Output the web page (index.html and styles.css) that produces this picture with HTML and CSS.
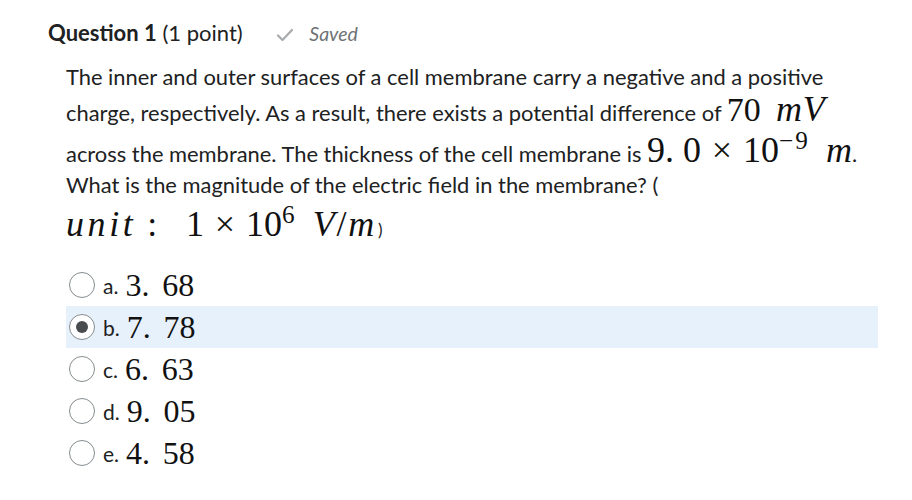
FILE: index.html
```html
<!DOCTYPE html>
<html>
<head>
<meta charset="utf-8">
<link rel="stylesheet" href="styles.css">
</head>
<body>
<div class="page">
  <div class="qhead">
    <span class="qtitle">Question 1</span>
    <span class="qpoints">(1 point)</span>
    <span class="saved">
      <svg class="check" width="18" height="14" viewBox="0 0 18 14"><polyline points="2,7.5 6.5,12 16,2" fill="none" stroke="#a8abae" stroke-width="2.2" stroke-linecap="round" stroke-linejoin="round"/></svg>
      <em>Saved</em>
    </span>
  </div>
  <div class="qbody">
    <div class="stem">
      <div class="line l1">The inner and outer surfaces of a cell membrane carry a negative and a positive</div>
      <div class="line l2">charge, respectively. As a result, there exists a potential difference of <span class="m m2">70<span class="sp"></span><i class="mv">mV</i></span></div>
      <div class="line l3">across the membrane. The thickness of the cell membrane is <span class="m m3">9.<span class="th"></span>0<span class="bin">×</span>10<sup>−9</sup><span class="sp"></span><i>m</i></span>.</div>
      <div class="line l4">What is the magnitude of the electric field in the membrane? (</div>
      <div class="line l5"><span class="m m5"><i class="wide">unit</i><span class="rel">:</span>1<span class="bin">×</span>10<sup>6</sup><span class="sp"></span><i>V</i><span class="slash">/</span><i class="wide">m</i></span><span class="paren">)</span></div>
    </div>
    <div class="options">
      <div class="opt"><span class="radio"></span><span class="lbl">a.</span><span class="m num">3.<span class="th"></span>68</span></div>
      <div class="opt sel"><span class="radio on"></span><span class="lbl">b.</span><span class="m num">7.<span class="th"></span>78</span></div>
      <div class="opt"><span class="radio"></span><span class="lbl">c.</span><span class="m num">6.<span class="th"></span>63</span></div>
      <div class="opt"><span class="radio"></span><span class="lbl">d.</span><span class="m num">9.<span class="th"></span>05</span></div>
      <div class="opt"><span class="radio"></span><span class="lbl">e.</span><span class="m num">4.<span class="th"></span>58</span></div>
    </div>
  </div>
</div>
</body>
</html>
```
FILE: styles.css
```css
html, body {
  margin: 0;
  padding: 0;
  background: #ffffff;
}
body {
  font-family: Lato, "Noto Sans", sans-serif;
  color: #202122;
}
.page {
  padding: 17.5px 0 0 48px;
}
.qhead {
  height: 30px;
  line-height: 30px;
  font-size: 22px;
  white-space: nowrap;
}
.qtitle {
  font-weight: 700;
}
.qpoints {
  font-weight: 400;
}
.saved {
  margin-left: 28px;
  color: #6e7376;
  font-size: 19.5px;
}
.saved em {
  margin-left: 10px;
}
.check {
  vertical-align: -1px;
}
.qbody {
  margin-left: 18px;
}
.stem {
  font-size: 21.9px;
  white-space: nowrap;
}
.line {
  height: 30px;
  line-height: 30px;
}
.l1 { margin-top: 14.5px; }
.l2 { margin-top: 6px; }
.l3 { margin-top: 11px; }
.l4 { margin-top: 1px; }
.l5 { margin-top: 13px; }
.m {
  font-family: "Liberation Serif", "DejaVu Serif", serif;
  line-height: 0;
  color: #111;
}
.m i {
  font-style: italic;
}
.m sup {
  font-size: 0.7em;
  line-height: 0;
  vertical-align: 0.5em;
  letter-spacing: 0.08em;
}
.sp {
  display: inline-block;
  width: 0.45em;
}
.th {
  display: inline-block;
  width: 0.25em;
}
.bin {
  margin: 0 0.3em;
}
.rel {
  margin: 0 0.8em 0 0.3em;
  font-style: normal;
}
.wide {
  letter-spacing: 0.1em;
}
.mv {
  letter-spacing: 0.02em;
  font-size: 1.06em;
}
.slash {
  margin: 0 0.05em;
}
.m2 { font-size: 34px; }
.m3 { font-size: 36px; }
.m5 { font-size: 36px; }
.paren { font-size: 17px; }
.options {
  margin-top: 21px;
  width: 812px;
}
.opt {
  height: 42px;
  display: flex;
  align-items: center;
  padding-left: 3px;
}
.opt.sel {
  background: #e7f1fb;
}
.radio {
  box-sizing: border-box;
  width: 26px;
  height: 26px;
  border: 1.5px solid #868c8f;
  border-radius: 50%;
  background: #fff;
  position: relative;
  flex: none;
}
.radio.on::after {
  content: "";
  position: absolute;
  left: 50%;
  top: 50%;
  width: 12px;
  height: 12px;
  margin: -6px 0 0 -6px;
  border-radius: 50%;
  background: #494c4e;
}
.lbl {
  font-size: 21px;
  margin-left: 8px;
  margin-right: 7px;
}
.num {
  font-size: 32px;
  line-height: 1;
}
.num .th {
  width: 0.4em;
}
```
